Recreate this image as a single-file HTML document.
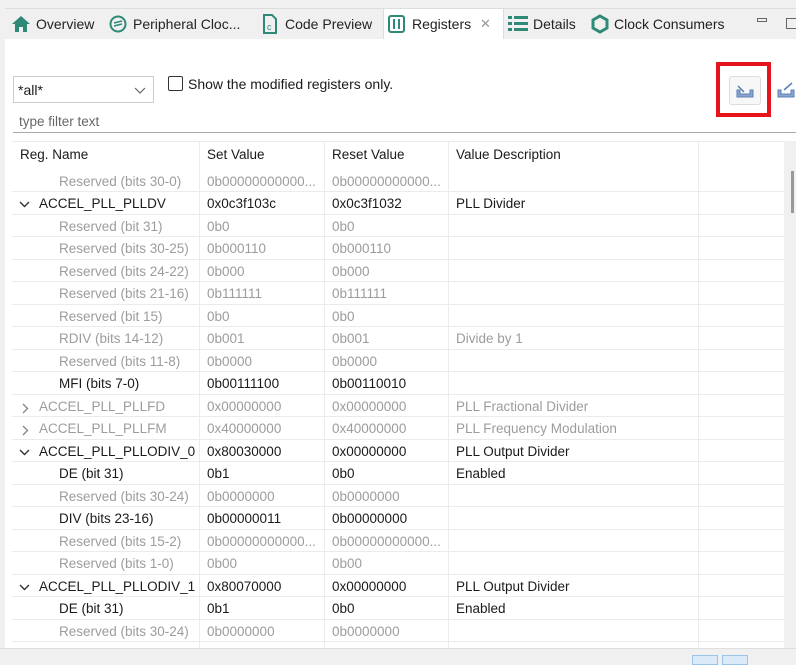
<!DOCTYPE html>
<html><head><style>
*{margin:0;padding:0;box-sizing:border-box}
body{width:796px;height:662px;overflow:hidden;background:#f0f0f0;font-family:"Liberation Sans",sans-serif;font-size:13.5px;color:#1a1a1a;position:relative}
.tabs{position:absolute;left:0;top:0;width:796px;height:40px;background:#f0f0f0}
.tab{position:absolute;top:8px;height:32px;line-height:32px;font-size:14px;color:#222}
.sel{position:absolute;left:383px;top:8px;width:121px;height:32px;background:#fff;border:1px solid #ddd;border-bottom:none}
.content{position:absolute;left:5px;top:39px;width:791px;height:609px;background:#fff}
.a{position:absolute}
.g{color:#9c9c9c}
.row{position:absolute;left:12px;width:772px;height:22.5px;border-bottom:1px solid #ebebeb;line-height:24px}
.row span{position:absolute;top:0;white-space:nowrap}
.row svg{position:absolute}
.vl{position:absolute;top:141px;height:507px;width:1px;background:#ebebeb}
</style></head><body>
<div class="tabs">
<div class="a" style="left:5px;top:8px;width:791px;height:1px;background:#ddd"></div>
<div class="sel"></div>
<svg class="a" style="left:11px;top:15px" width="20" height="18"><path d="M10 1L1 9h3v8h4v-5h4v5h4V9h3z" fill="#2e8a77"/></svg>
<div class="tab" style="left:36px">Overview</div>
<svg class="a" style="left:109px;top:15px" width="18" height="18"><circle cx="9" cy="9" r="7.5" fill="none" stroke="#2e8a77" stroke-width="2"/><path d="M5 8l8-2M5 11l8-2" stroke="#2e8a77" stroke-width="1.6"/></svg>
<div class="tab" style="left:133px">Peripheral Cloc...</div>
<svg class="a" style="left:262px;top:14px" width="16" height="20"><path d="M2 1h8l4 4v14H2z" fill="none" stroke="#2e8a77" stroke-width="2"/><text x="5" y="16" font-size="9" fill="#2e8a77" font-family="Liberation Sans">c</text></svg>
<div class="tab" style="left:285px">Code Preview</div>
<svg class="a" style="left:388px;top:15px" width="18" height="18"><rect x="1" y="1" width="15" height="16" rx="2" fill="none" stroke="#2e8a77" stroke-width="2"/><path d="M6 4v10M11 4v10" stroke="#2e8a77" stroke-width="2"/></svg>
<div class="tab" style="left:412px">Registers</div>
<div class="tab" style="left:480px;color:#999;font-size:13px">✕</div>
<svg class="a" style="left:508px;top:15px" width="21" height="18"><g fill="#2e8a77"><rect x="0" y="1" width="4" height="3"/><rect x="6" y="1" width="14" height="3"/><rect x="0" y="7" width="4" height="3"/><rect x="6" y="7" width="14" height="3"/><rect x="0" y="13" width="4" height="3"/><rect x="6" y="13" width="14" height="3"/></g></svg>
<div class="tab" style="left:533px">Details</div>
<svg class="a" style="left:590px;top:14px" width="20" height="20"><path d="M10 2l7 4v8l-7 4-7-4V6z" fill="none" stroke="#2e8a77" stroke-width="3"/></svg>
<div class="tab" style="left:614px">Clock Consumers</div>
<div class="a" style="left:757px;top:18px;width:10px;height:4px;border:1px solid #666"></div>
<div class="a" style="left:786px;top:18px;width:12px;height:11px;border:1px solid #666"></div>
</div>
<div class="content"></div>
<div class="a" style="left:13px;top:76px;width:141px;height:27px;border:1px solid #ccc;background:#fff;line-height:26px;padding-left:4px;font-size:14px">*all*<svg style="position:absolute;right:7px;top:10px" width="12" height="7"><path d="M1 1l5 5 5-5" fill="none" stroke="#666" stroke-width="1.2"/></svg></div>
<div class="a" style="left:168px;top:76px;width:15px;height:15px;border:1px solid #333;border-radius:2px;background:#fff"></div>
<div class="a" style="left:188px;top:76px;font-size:14px">Show the modified registers only.</div>
<div class="a" style="left:716px;top:62px;width:55px;height:55px;border:4px solid #e8141c"></div>
<div class="a" style="left:729px;top:76px;width:32px;height:29px;border:1px solid #ddd;border-radius:3px;background:#f7f7f7"></div>
<svg class="a" style="left:735px;top:82px" width="20" height="18"><path d="M3 4l6 6" stroke="#5b7fb5" stroke-width="1.5"/><path d="M2 8v7h16V8h-3v4H5V8z" fill="#8aa5cf" stroke="#5b7fb5"/></svg>
<svg class="a" style="left:776px;top:80px" width="20" height="20"><path d="M8 10l8-7" stroke="#5b7fb5" stroke-width="1.5"/><path d="M2 10v7h16v-7h-3v4H5v-4z" fill="#8aa5cf" stroke="#5b7fb5"/></svg>
<div class="a" style="left:13px;top:109px;width:783px;height:24px;border-bottom:1px solid #aaa;line-height:25px;padding-left:6px;color:#666">type filter text</div>
<div class="a" style="left:12px;top:141px;width:772px;height:1px;background:#ebebeb"></div>
<div class="a" style="left:20px;top:147px">Reg. Name</div>
<div class="a" style="left:207px;top:147px">Set Value</div>
<div class="a" style="left:332px;top:147px">Reset Value</div>
<div class="a" style="left:456px;top:147px">Value Description</div>
<div class="vl" style="left:199px"></div><div class="vl" style="left:324px"></div><div class="vl" style="left:448px"></div><div class="vl" style="left:698px"></div>
<div class="a" style="left:784px;top:141px;width:12px;height:507px;background:#f0f0f0"></div>
<div class="a" style="left:791px;top:171px;width:3px;height:42px;background:#999"></div>
<div id="rows"></div>
<div class="a" style="left:0;top:648px;width:796px;height:14px;background:#f0f0f0;border-top:1px solid #ddd"></div>
<div class="a" style="left:692px;top:655px;width:26px;height:10px;border:1px solid #9cc3ea;background:#dbeaf8"></div>
<div class="a" style="left:722px;top:655px;width:26px;height:10px;border:1px solid #9cc3ea;background:#dbeaf8"></div>
<script>
var R=[
["c","g","Reserved (bits 30-0)","0b00000000000...","0b00000000000...",""],
["o","","ACCEL_PLL_PLLDV","0x0c3f103c","0x0c3f1032","PLL Divider"],
["c","g","Reserved (bit 31)","0b0","0b0",""],
["c","g","Reserved (bits 30-25)","0b000110","0b000110",""],
["c","g","Reserved (bits 24-22)","0b000","0b000",""],
["c","g","Reserved (bits 21-16)","0b111111","0b111111",""],
["c","g","Reserved (bit 15)","0b0","0b0",""],
["c","g","RDIV (bits 14-12)","0b001","0b001","Divide by 1"],
["c","g","Reserved (bits 11-8)","0b0000","0b0000",""],
["c","","MFI (bits 7-0)","0b00111100","0b00110010",""],
["p","g","ACCEL_PLL_PLLFD","0x00000000","0x00000000","PLL Fractional Divider"],
["p","g","ACCEL_PLL_PLLFM","0x40000000","0x40000000","PLL Frequency Modulation"],
["o","","ACCEL_PLL_PLLODIV_0","0x80030000","0x00000000","PLL Output Divider"],
["c","","DE (bit 31)","0b1","0b0","Enabled"],
["c","g","Reserved (bits 30-24)","0b0000000","0b0000000",""],
["c","","DIV (bits 23-16)","0b00000011","0b00000000",""],
["c","g","Reserved (bits 15-2)","0b00000000000...","0b00000000000...",""],
["c","g","Reserved (bits 1-0)","0b00","0b00",""],
["o","","ACCEL_PLL_PLLODIV_1","0x80070000","0x00000000","PLL Output Divider"],
["c","","DE (bit 31)","0b1","0b0","Enabled"],
["c","g","Reserved (bits 30-24)","0b0000000","0b0000000",""]];
var h="";
R.forEach(function(r,i){var y=169.5+i*22.5;
var ic=r[0]=="o"?'<svg style="left:7px;top:9px" width="11" height="7"><path d="M1 1l4.5 4.5L10 1" fill="none" stroke="#333" stroke-width="1.4"/></svg>':r[0]=="p"?'<svg style="left:10px;top:8px" width="7" height="11"><path d="M1 1l4.5 4.5L1 10" fill="none" stroke="#888" stroke-width="1.4"/></svg>':"";
var nx=r[0]=="c"?47:27;
h+='<div class="row '+r[1]+'" style="top:'+y+'px">'+ic+'<span style="left:'+nx+'px">'+r[2]+'</span><span style="left:195px">'+r[3]+'</span><span style="left:320px">'+r[4]+'</span><span style="left:444px">'+r[5]+'</span></div>';});
document.getElementById("rows").innerHTML=h;
</script>
</body></html>
